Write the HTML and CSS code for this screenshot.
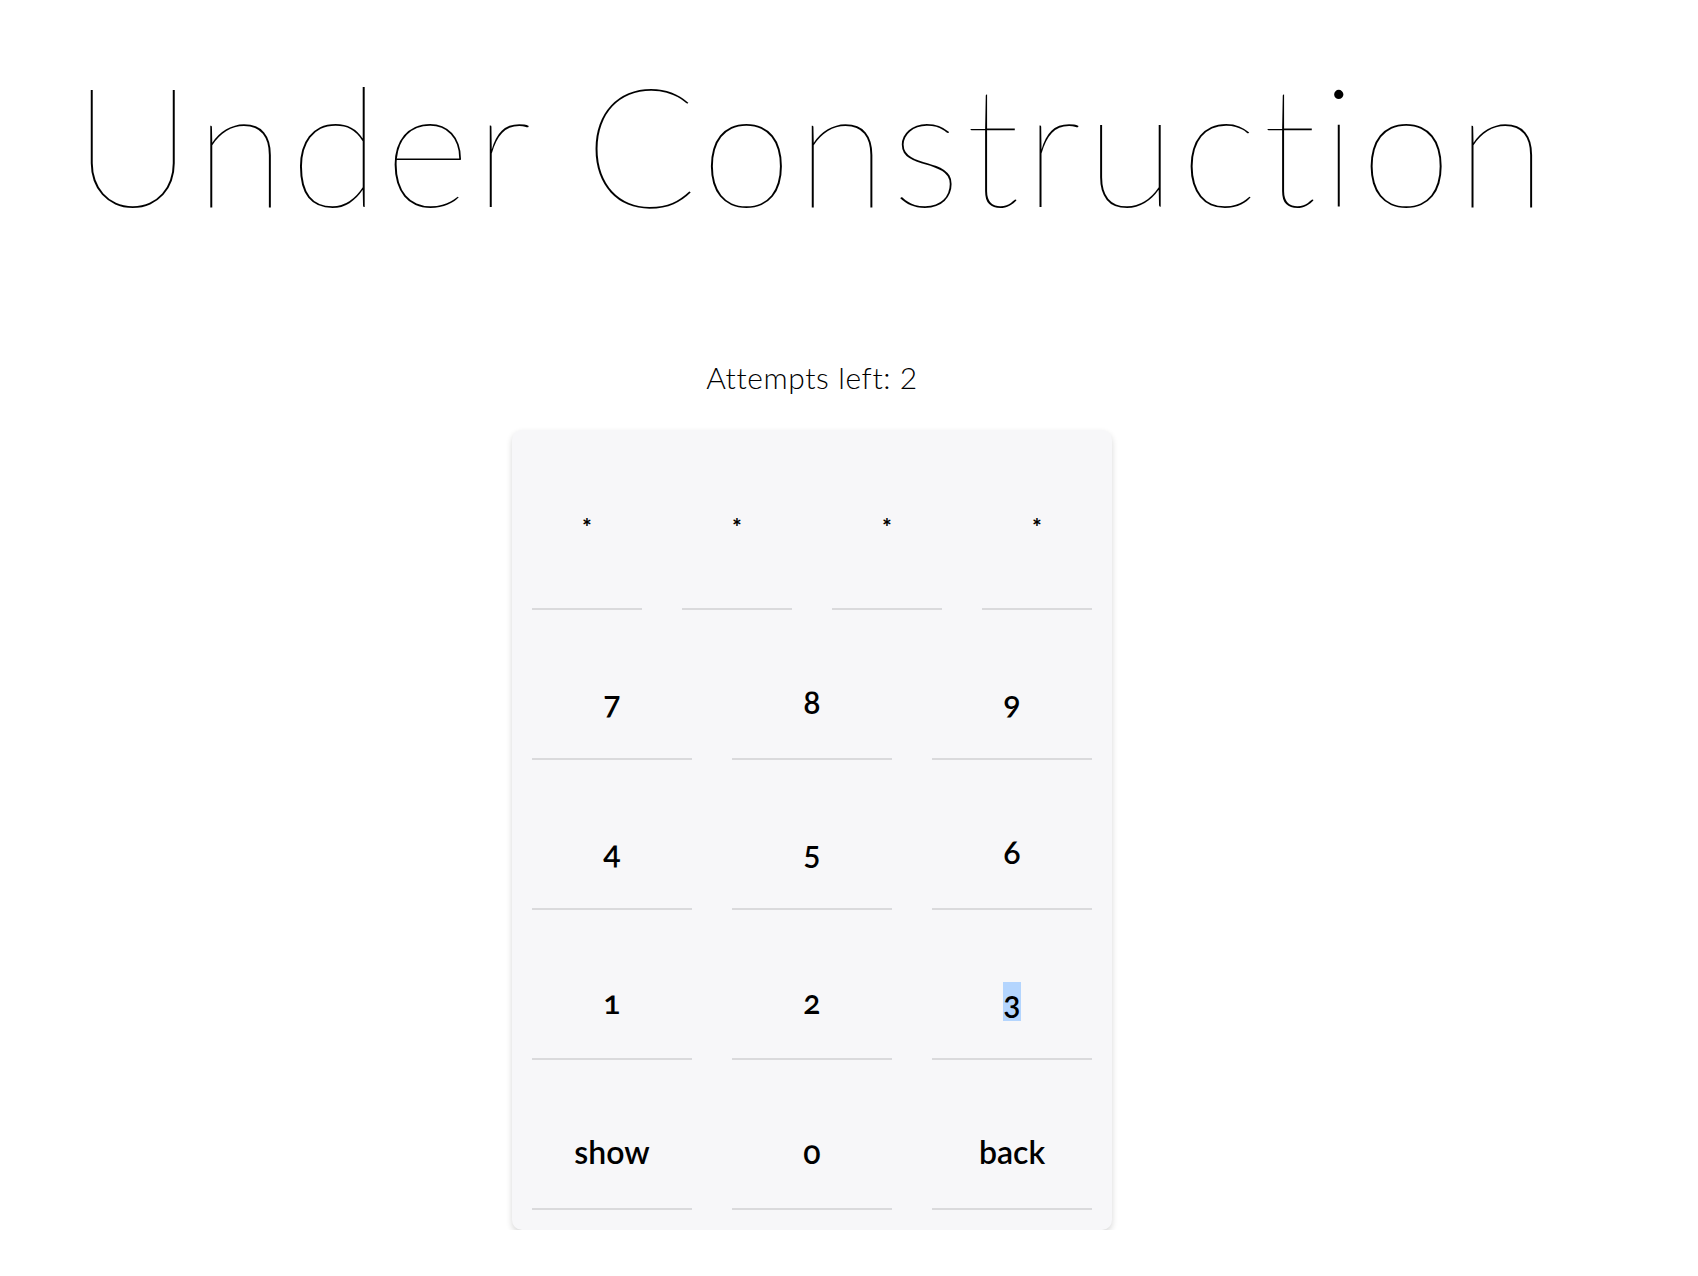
FILE: index.html
```html
<!DOCTYPE html>
<html lang="en">
<head>
<meta charset="utf-8">
<title>Under Construction</title>
<link rel="stylesheet" href="styles.css">
</head>
<body>
<main class="page">
  <h1 class="title">Under Construction</h1>
  <p class="attempts">Attempts left: 2</p>
  <section class="pad">
    <div class="code">
      <div class="code-cell"><span class="star">*</span></div>
      <div class="code-cell"><span class="star">*</span></div>
      <div class="code-cell"><span class="star">*</span></div>
      <div class="code-cell"><span class="star">*</span></div>
    </div>
    <div class="keys">
      <div class="key">7</div>
      <div class="key">8</div>
      <div class="key">9</div>
      <div class="key">4</div>
      <div class="key">5</div>
      <div class="key">6</div>
      <div class="key">1</div>
      <div class="key">2</div>
      <div class="key"><span class="selected">3</span></div>
      <div class="key">show</div>
      <div class="key">0</div>
      <div class="key">back</div>
    </div>
  </section>
</main>
</body>
</html>
```

FILE: styles.css
```css
html, body {
  margin: 0;
  padding: 0;
  background: #ffffff;
}

.page {
  width: 1624px;
  display: flex;
  flex-direction: column;
  align-items: center;
  font-family: "Lato", "Liberation Sans", sans-serif;
  font-variant-ligatures: none;
  color: #000;
}

.title {
  margin: 60px 0 0 0;
  font-size: 166px;
  line-height: 166px;
  font-weight: 200;
  letter-spacing: 4.5px;
  white-space: nowrap;
}

.attempts {
  margin: 136px 0 0 0;
  font-size: 30px;
  line-height: 30px;
  font-weight: 300;
  letter-spacing: 0.6px;
}

.pad {
  margin-top: 38px;
  width: 600px;
  box-sizing: border-box;
  padding: 20px;
  background: #f7f7f9;
  border-radius: 10px;
  box-shadow: 0 3px 6px rgba(0, 0, 0, 0.16);
}

.code {
  display: grid;
  grid-template-columns: repeat(4, 110px);
  column-gap: 40px;
}

.code-cell {
  height: 160px;
  box-sizing: border-box;
  border-bottom: 2px solid #dadadc;
  padding-top: 66px;
  text-align: center;
  font-size: 22px;
  line-height: 22px;
  font-weight: 900;
}

.keys {
  display: grid;
  grid-template-columns: repeat(3, 160px);
  column-gap: 40px;
}

.key {
  height: 150px;
  box-sizing: border-box;
  border-bottom: 2px solid #dadadc;
  padding-top: 76px;
  text-align: center;
  font-size: 32px;
  line-height: 32px;
  font-weight: 600;
  font-variant-numeric: oldstyle-nums;
}

.selected {
  background: #b4d5fe;
}
```
